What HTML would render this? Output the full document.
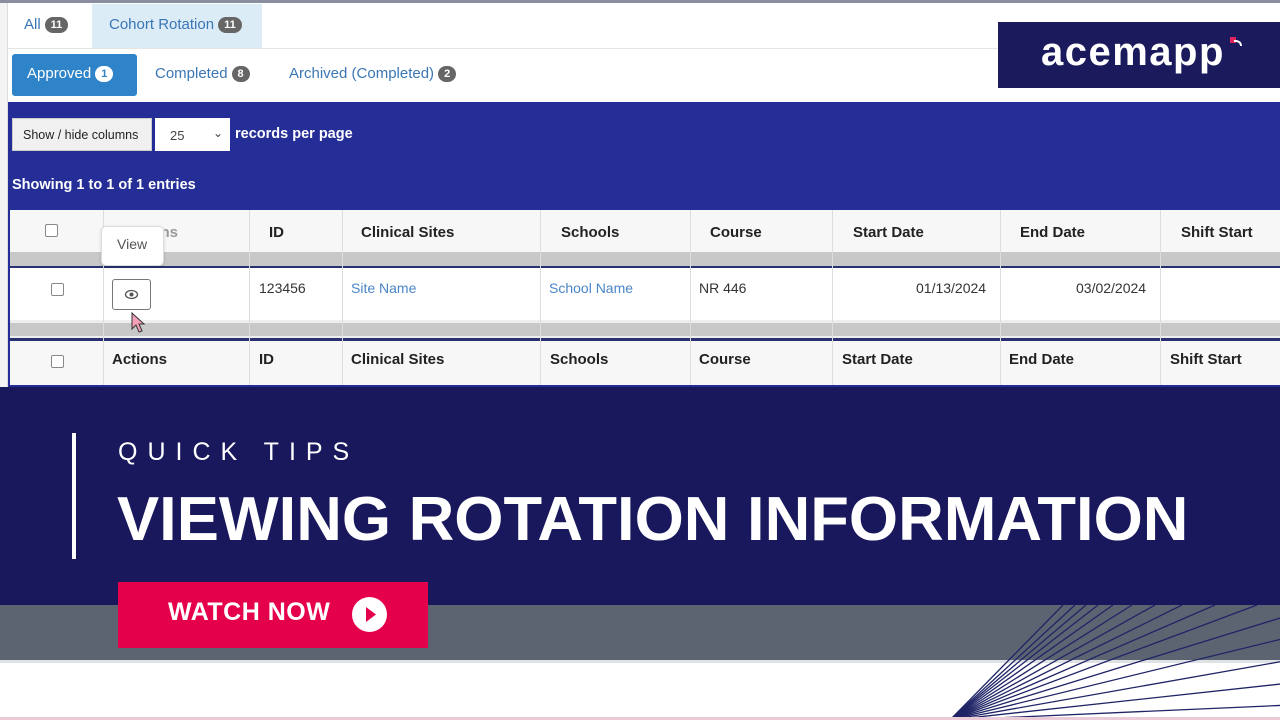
<!DOCTYPE html>
<html><head><meta charset="utf-8"><style>
*{margin:0;padding:0;box-sizing:border-box}
body{width:1280px;height:720px;overflow:hidden;background:#fff;font-family:"Liberation Sans",Arial,sans-serif;position:relative}
.abs{position:absolute}
.badge{display:inline-block;background:#666;color:#fff;border-radius:9px;font-size:11px;font-weight:bold;padding:2px 6px;vertical-align:1px;margin-left:4px}
.th{position:absolute;font-size:15px;font-weight:bold;color:#222}
.td{position:absolute;font-size:14px;color:#333}
.cb{position:absolute;width:13px;height:13px;border:1px solid #888;border-radius:2px;background:#fff}
.vl{position:absolute;width:1px;background:#ddd}
</style></head><body>
<div class="abs" style="left:0;top:0;width:1280px;height:3px;background:#8a8ea0"></div>
<div class="abs" style="left:0;top:3px;width:8px;height:384px;background:#f3f3f3;border-right:1px solid #ddd"></div>
<div class="abs" style="left:92px;top:4px;width:170px;height:44px;background:#dcecf7"></div>
<div class="abs" style="left:8px;top:48px;width:990px;height:1px;background:#e5e5e5"></div>
<div class="abs" style="left:24px;top:16px;font-size:15px;color:#3a76b4">All<span class="badge">11</span></div>
<div class="abs" style="left:109px;top:16px;font-size:15px;color:#3a76b4">Cohort Rotation<span class="badge">11</span></div>
<div class="abs" style="left:12px;top:54px;width:125px;height:42px;background:#2f84c9;border-radius:3px"></div>
<div class="abs" style="left:27px;top:65px;font-size:15px;color:#fff">Approved<span class="badge" style="background:#fff;color:#2f84c9">1</span></div>
<div class="abs" style="left:155px;top:65px;font-size:15px;color:#3a76b4">Completed<span class="badge">8</span></div>
<div class="abs" style="left:289px;top:65px;font-size:15px;color:#3a76b4">Archived (Completed)<span class="badge">2</span></div>
<div class="abs" style="left:998px;top:22px;width:282px;height:66px;background:#1a1a5c"></div>
<div class="abs" style="left:1041px;top:30px;font-size:40px;font-weight:bold;color:#fff;letter-spacing:1.5px">acemapp</div>
<div class="abs" style="left:1230px;top:37px;width:6px;height:6px;background:#e0245e"></div>
<div class="abs" style="left:1234px;top:40px;width:8px;height:6px;border-top:2px solid #fff;border-right:2px solid #fff;border-radius:0 6px 0 0"></div>
<div class="abs" style="left:8px;top:102px;width:1272px;height:285px;background:#252e96"></div>
<div class="abs" style="left:12px;top:118px;width:140px;height:33px;background:#f0f0f0;border:1px solid #ccc;font-size:12.5px;color:#222;padding:9px 0 0 10px">Show / hide columns</div>
<div class="abs" style="left:155px;top:118px;width:75px;height:33px;background:#fff;font-size:13px;color:#444;padding:10px 0 0 15px">25<span style="position:absolute;left:58px;top:8px;font-size:12px">&#8964;</span></div>
<div class="abs" style="left:235px;top:126px;font-size:14.5px;font-weight:bold;color:#fff">records per page</div>
<div class="abs" style="left:12px;top:177px;font-size:14.5px;font-weight:bold;color:#fff">Showing 1 to 1 of 1 entries</div>
<div class="abs" style="left:10px;top:210px;width:1270px;height:42px;background:#f7f7f7"></div>
<div class="abs" style="left:10px;top:252px;width:1270px;height:14px;background:#c8c8c8"></div>
<div class="abs" style="left:10px;top:266px;width:1270px;height:2px;background:#2a3170"></div>
<div class="abs" style="left:10px;top:268px;width:1270px;height:52px;background:#fff"></div>
<div class="abs" style="left:10px;top:320px;width:1270px;height:18px;background:#c8c8c8;border-top:3px solid #eee;border-bottom:2px solid #eee"></div>
<div class="abs" style="left:10px;top:338px;width:1270px;height:3px;background:#2a3170"></div>
<div class="abs" style="left:10px;top:341px;width:1270px;height:44px;background:#f7f7f7"></div>
<div class="vl" style="left:103px;top:210px;height:175px"></div><div class="vl" style="left:249px;top:210px;height:175px"></div><div class="vl" style="left:342px;top:210px;height:175px"></div><div class="vl" style="left:540px;top:210px;height:175px"></div><div class="vl" style="left:690px;top:210px;height:175px"></div><div class="vl" style="left:832px;top:210px;height:175px"></div><div class="vl" style="left:1000px;top:210px;height:175px"></div><div class="vl" style="left:1160px;top:210px;height:175px"></div>
<div class="cb" style="left:45px;top:224px"></div><div class="cb" style="left:51px;top:283px"></div><div class="cb" style="left:51px;top:355px"></div>
<div class="th" style="left:123px;top:224px;color:#999">Actions</div>
<div class="th" style="left:269px;top:224px">ID</div>
<div class="th" style="left:361px;top:224px">Clinical Sites</div>
<div class="th" style="left:561px;top:224px">Schools</div>
<div class="th" style="left:710px;top:224px">Course</div>
<div class="th" style="left:853px;top:224px">Start Date</div>
<div class="th" style="left:1020px;top:224px">End Date</div>
<div class="th" style="left:1181px;top:224px">Shift Start</div>
<div class="abs" style="left:101px;top:226px;width:63px;height:40px;background:#fff;border:1px solid #ddd;border-radius:5px;font-size:14px;color:#555;padding:9px 0 0 15px;box-shadow:0 1px 3px rgba(0,0,0,.15)">View</div>
<div class="td" style="left:259px;top:280px">123456</div>
<div class="td" style="left:351px;top:280px;color:#4a86c8">Site Name</div>
<div class="td" style="left:549px;top:280px;color:#4a86c8">School Name</div>
<div class="td" style="left:699px;top:280px">NR 446</div>
<div class="td" style="left:916px;top:280px">01/13/2024</div>
<div class="td" style="left:1076px;top:280px">03/02/2024</div>
<div class="abs" style="left:112px;top:279px;width:39px;height:31px;border:1px solid #777;border-radius:3px;background:#fff"><svg width="37" height="29"><ellipse cx="18.5" cy="14.5" rx="6" ry="4" fill="none" stroke="#555" stroke-width="1.3"/><circle cx="18.5" cy="14.5" r="2" fill="#555"/></svg></div>
<svg class="abs" style="left:131px;top:312px" width="16" height="22"><path d="M1 1 L1 17 L5 13 L8 20 L11 19 L8 12 L13 12 Z" fill="#f4a0b8" stroke="#333" stroke-width="1"/></svg>
<div class="th" style="left:112px;top:351px">Actions</div>
<div class="th" style="left:259px;top:351px">ID</div>
<div class="th" style="left:351px;top:351px">Clinical Sites</div>
<div class="th" style="left:550px;top:351px">Schools</div>
<div class="th" style="left:699px;top:351px">Course</div>
<div class="th" style="left:842px;top:351px">Start Date</div>
<div class="th" style="left:1009px;top:351px">End Date</div>
<div class="th" style="left:1170px;top:351px">Shift Start</div>
<div class="abs" style="left:0;top:387px;width:1280px;height:218px;background:#19185c"></div>
<div class="abs" style="left:0;top:605px;width:1280px;height:55px;background:#5c6472"></div>
<div class="abs" style="left:0;top:660px;width:1280px;height:3px;background:#dfe2e4"></div>
<svg class="abs" style="left:0;top:605px" width="1280" height="115"><g stroke="#1f2466" stroke-width="1.3" fill="none">
<line x1="950" y1="115" x2="1063" y2="0"/><line x1="950" y1="115" x2="1075" y2="0"/><line x1="950" y1="115" x2="1086" y2="0"/><line x1="950" y1="115" x2="1098" y2="0"/><line x1="950" y1="115" x2="1113" y2="0"/><line x1="950" y1="115" x2="1132" y2="0"/><line x1="950" y1="115" x2="1155" y2="0"/><line x1="950" y1="115" x2="1182" y2="0"/><line x1="950" y1="115" x2="1215" y2="0"/><line x1="950" y1="115" x2="1257" y2="0"/><line x1="950" y1="115" x2="1290" y2="10"/><line x1="950" y1="115" x2="1290" y2="32"/><line x1="950" y1="115" x2="1290" y2="55"/><line x1="950" y1="115" x2="1290" y2="78"/><line x1="950" y1="115" x2="1290" y2="100"/></g></svg>
<div class="abs" style="left:0;top:717px;width:1280px;height:3px;background:#eccbd8"></div>
<div class="abs" style="left:72px;top:433px;width:4px;height:126px;background:#fff"></div>
<div class="abs" style="left:118px;top:438px;font-size:25px;color:#fff;letter-spacing:10px">QUICK TIPS</div>
<div class="abs" style="left:117px;top:484px;font-size:62px;font-weight:bold;color:#fff;white-space:nowrap;transform-origin:0 0;transform:scaleX(1.02)">VIEWING ROTATION INFORMATION</div>
<div class="abs" style="left:118px;top:582px;width:310px;height:66px;background:#e5004b"></div>
<div class="abs" style="left:168px;top:598px;font-size:25px;font-weight:bold;color:#fff;letter-spacing:0.5px">WATCH NOW</div>
<div class="abs" style="left:352px;top:597px;width:35px;height:35px;border-radius:50%;background:#fff"></div>
<svg class="abs" style="left:352px;top:597px" width="35" height="35"><path d="M14 10 L24 17.5 L14 25 Z" fill="#e5004b"/></svg>
</body></html>
